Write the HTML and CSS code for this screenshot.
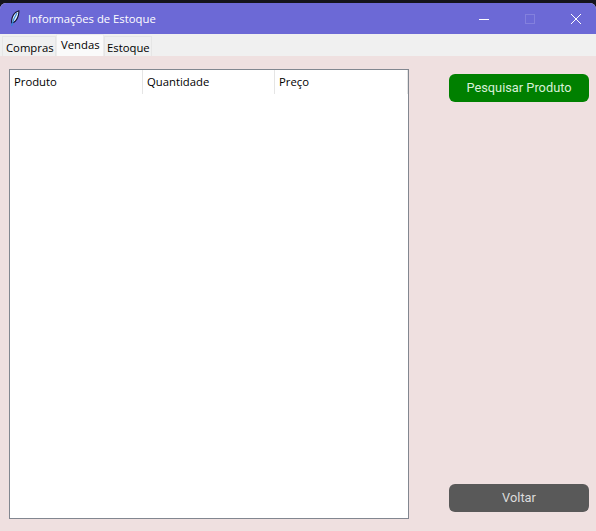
FILE: index.html
```html
<!DOCTYPE html>
<html>
<head>
    <meta name="viewport" content="width=device-width, initial-scale=1.0">
    <link rel="stylesheet" href="styles.css">
</head>
<body>
    <div class="window">
        <div class="titlebar">
            <svg class="app-icon" width="16" height="18" viewBox="0 0 16 18">
                <path d="M12.4 .2C9 .8 5.6 3.8 4.6 7.8 4 10.2 4 12.2 4.4 13.6 7.6 13.4 10 10.6 11.2 7.4 12 5.2 12.6 2.4 12.4 .2z" fill="#0d1030"/>
                <path d="M11.4 1.4C9 2.2 6.6 4.6 5.7 8 5.3 9.6 5.2 11 5.3 12.2 7.6 11.6 9.4 9.2 10.3 6.8 10.9 5 11.3 3 11.4 1.4z" fill="#e4f0fa"/>
                <path d="M10 3C7.8 6.4 6 10 4.6 16" fill="none" stroke="#2f86d6" stroke-width="1.2"/>
            </svg>
            <span class="title">Informações de Estoque</span>
            <div class="window-controls">
                <button class="control">
                    <svg width="12" height="12" viewBox="0 0 12 12"><path d="M1 6.5h10" stroke="#fff" stroke-width="1"/></svg>
                </button>
                <button class="control">
                    <svg width="12" height="12" viewBox="0 0 12 12"><rect x="1.5" y="1.5" width="9" height="9" fill="none" stroke="#8380dd" stroke-width="1"/></svg>
                </button>
                <button class="control">
                    <svg width="12" height="12" viewBox="0 0 12 12"><path d="M1 1l10 10M11 1L1 11" stroke="#fff" stroke-width="1"/></svg>
                </button>
            </div>
        </div>

        <div class="tabs">
            <div class="tab tab-compras">Compras</div>
            <div class="tab tab-active">Vendas</div>
            <div class="tab tab-estoque">Estoque</div>
        </div>

        <div class="content">
            <div class="table">
                <div class="table-header">
                    <div class="col col-produto">Produto</div>
                    <div class="col col-quantidade">Quantidade</div>
                    <div class="col col-preco">Preço</div>
                </div>
            </div>
            <div class="actions">
                <button class="button button-search">Pesquisar Produto</button>
                <button class="button button-back">Voltar</button>
            </div>
        </div>
    </div>
</body>
</html>
```

FILE: styles.css
```css
html, body {
    margin: 0;
    padding: 0;
    height: 100%;
    overflow: hidden;
    background: #14141c;
}
.window {
    height: 528px;
    margin-top: 3px;
    display: flex;
    flex-direction: column;
    font-family: "Open Sans", "Noto Sans", sans-serif;
    font-size: 11.3px;
    color: #000;
    background: #efe0e0;
    border-radius: 6px 6px 0 0;
    overflow: hidden;
}
.titlebar {
    height: 31px;
    flex-shrink: 0;
    display: flex;
    align-items: center;
    background: #6c69d6;
    color: white;
}
.app-icon {
    margin-left: 7px;
    margin-top: 1px;
}
.title {
    margin-left: 5px;
}
.window-controls {
    margin-left: auto;
    margin-right: -3px;
    display: flex;
}
.control {
    width: 46px;
    height: 31px;
    padding: 0;
    border: none;
    background: none;
    display: flex;
    align-items: center;
    justify-content: center;
}
.tabs {
    height: 22px;
    flex-shrink: 0;
    display: flex;
    align-items: flex-start;
    padding-left: 2px;
    background: #f0f0f0;
}
.tab {
    box-sizing: border-box;
    height: 20px;
    margin-top: 2px;
    line-height: 21px;
    background: #f0f0f0;
    border: 1px solid #e6e6e6;
    border-bottom: none;
}
.tab-compras {
    width: 54px;
    padding-left: 3px;
}
.tab-active {
    width: 48px;
    height: 22px;
    margin-top: 0;
    line-height: 19px;
    padding-left: 4px;
    background: #fafafa;
    border-color: #ececec;
}
.tab-estoque {
    width: 48px;
    padding-left: 2px;
}
.content {
    flex: 1;
    display: flex;
    align-items: flex-start;
    padding: 13px 7px 12px 9px;
}
.table {
    width: 400px;
    height: 450px;
    box-sizing: border-box;
    background: white;
    border: 1px solid #828790;
}
.table-header {
    display: flex;
    height: 24px;
}
.col {
    box-sizing: border-box;
    height: 24px;
    line-height: 23px;
    padding-left: 4px;
    border-right: 1px solid #e5e5e5;
}
.col-produto {
    width: 133px;
}
.col-quantidade {
    width: 132px;
}
.col-preco {
    width: 133px;
}
.actions {
    margin-left: 40px;
    width: 140px;
    height: 438px;
    margin-top: 5px;
    display: flex;
    flex-direction: column;
    justify-content: space-between;
}
.button {
    height: 28px;
    padding: 0 0 2px;
    border: none;
    border-radius: 6px;
    font-family: Roboto, sans-serif;
    font-size: 12.8px;
}
.button-search {
    background: #008000;
    color: #d8f0d8;
}
.button-back {
    background: #595959;
    color: #dcdcdc;
}
```
